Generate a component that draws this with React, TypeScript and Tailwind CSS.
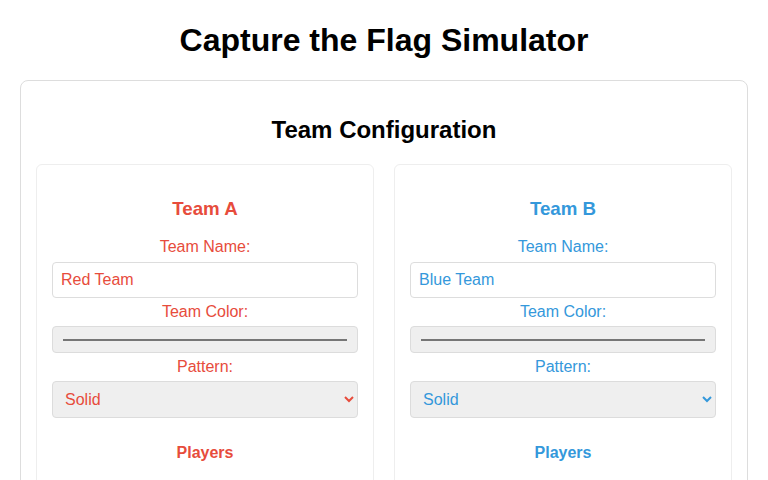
const teams = [
  { title: 'Team A', name: 'Red Team', color: 'text-[#e74c3c]' },
  { title: 'Team B', name: 'Blue Team', color: 'text-[#3498db]' },
];

function TeamCard({ title, name, color }: { title: string; name: string; color: string }) {
  return (
    <div className={`border border-[#eee] rounded-[6px] p-[15px] text-center ${color}`}>
      <h3 className="text-[18.72px] font-bold mt-[18.72px] mb-[18.72px] leading-[21.5px]">{title}</h3>
      <label className="block my-[5px] leading-[18.4px]">Team Name:</label>
      <input
        type="text"
        defaultValue={name}
        className="block w-full h-[36px] px-2 border border-[#ddd] rounded-[4px] bg-white text-left outline-none"
      />
      <label className="block my-[5px] leading-[18.4px]">Team Color:</label>
      <div className="flex items-center h-[27px] px-[10px] bg-[#efefef] border border-[#dcdcdc] rounded-[4px]">
        <div className="h-[2px] w-full bg-[#767676]" />
      </div>
      <label className="block mt-[5px] mb-[4px] leading-[18.4px]">Pattern:</label>
      <select className="block w-full h-[37px] pl-[8px] pr-2 bg-[#efefef] border border-[#dcdcdc] rounded-[4px] text-left outline-none">
        <option>Solid</option>
        <option>Striped</option>
        <option>Dotted</option>
      </select>
      <h4 className="font-bold mt-[26px] mb-[21px] leading-[18.4px]">Players</h4>
    </div>
  );
}

export default function App() {
  return (
    <div className="min-h-screen bg-white px-5 font-['Liberation_Sans',Arial,sans-serif] text-black">
      <h1 className="text-[32px] font-bold text-center pt-[22px] pb-[21px] leading-[37px]">Capture the Flag Simulator</h1>
      <div className="border border-[#ddd] rounded-[8px] px-[15px] pt-[16px] pb-[15px]">
        <h2 className="text-[24px] font-bold text-center mt-[19px] mb-[20px] leading-[27.5px]">Team Configuration</h2>
        <div className="grid grid-cols-2 gap-5">
          {teams.map((t) => (
            <TeamCard key={t.title} {...t} />
          ))}
        </div>
      </div>
    </div>
  );
}
